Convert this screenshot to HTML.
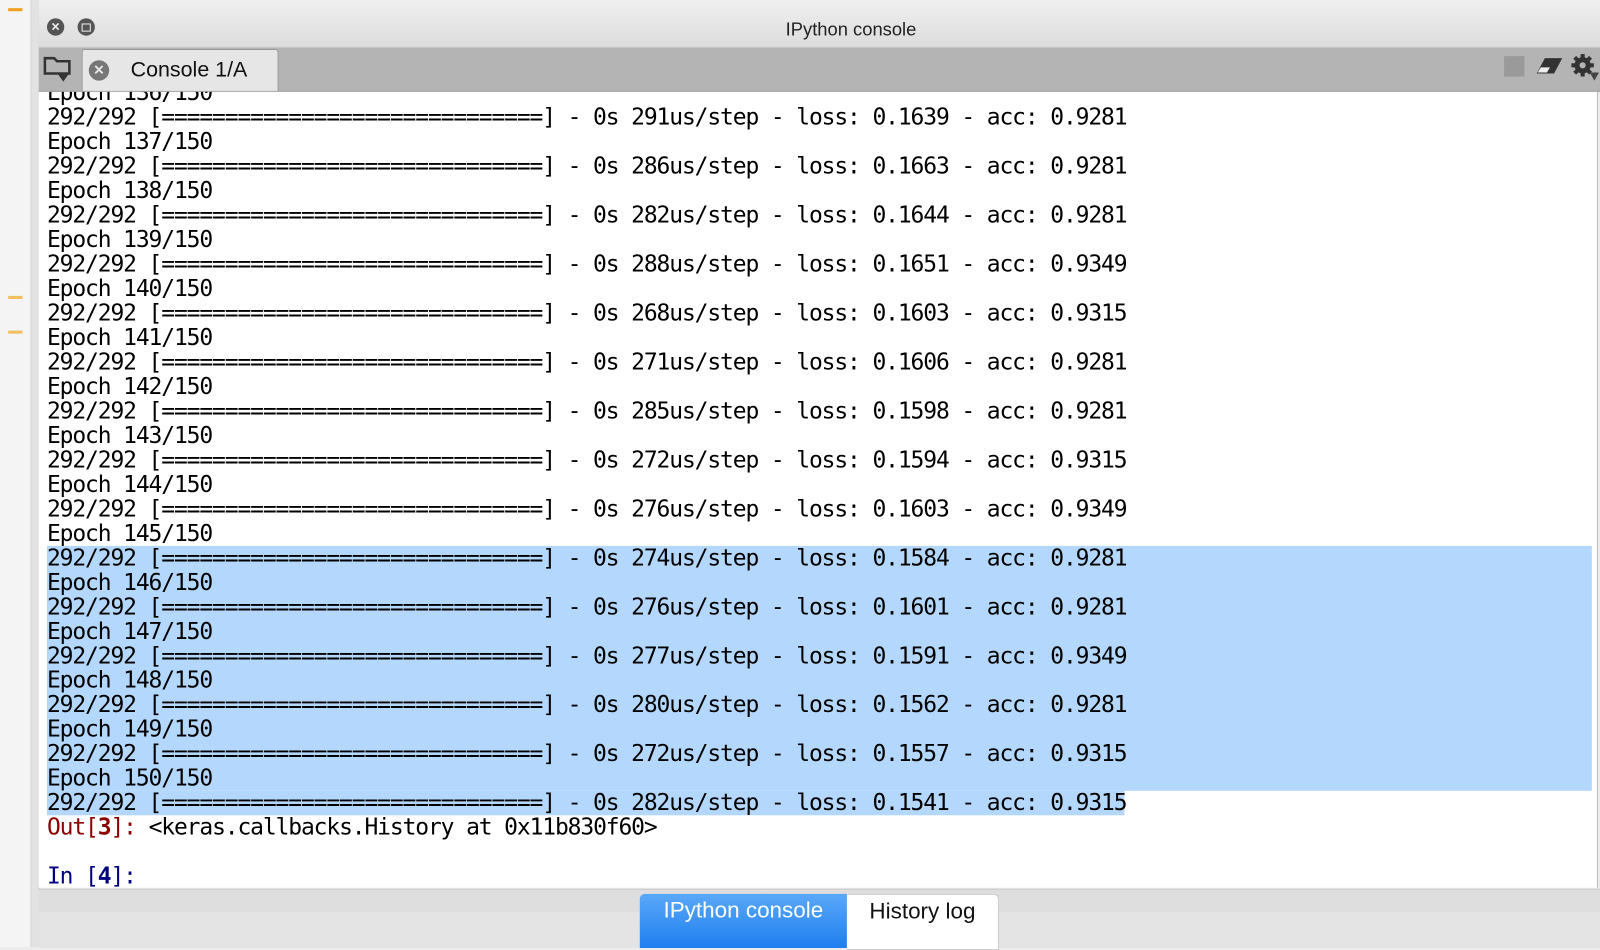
<!DOCTYPE html>
<html><head><meta charset="utf-8"><style>
body{margin:0;width:1600px;height:928px;overflow:hidden;background:#ececec;font-family:"Liberation Sans",sans-serif;position:relative}
#wrap{position:absolute;left:0;top:0;width:1568px;height:910px;transform:scale(1.0204);transform-origin:0 0}
.abs{position:absolute}
#left{left:0;top:0;width:30px;height:928px;background:#f4f4f4;border-right:1px solid #d0d0d0}
#left2{left:31px;top:0;width:7px;height:928px;background:#e2e2e2;border-right:1px solid #c8c8c8}
#title{left:38px;top:0;width:1562px;height:46px;background:linear-gradient(#f0f0f0,#dcdcdc);border-bottom:1px solid #c4c4c4}
#tb{left:38px;top:47px;width:1562px;height:42px;background:#b4b4b4;border-bottom:1px solid #9a9a9a}
#con{left:38px;top:90px;width:1527px;height:780px;background:#fff;border-right:1px solid #bbb;overflow:hidden}
.ln{position:absolute;left:8px;margin-top:2px;height:24px;line-height:24px;font-family:"DejaVu Sans Mono","Liberation Mono",monospace;font-size:22.5px;letter-spacing:-1.1px;white-space:pre;color:#000}
.hl{position:absolute;background:#b3d7fd}
#bot{left:38px;top:871px;width:1562px;height:57px;background:#e4e4e4;border-top:1px solid #c8c8c8}
</style></head><body><div id="wrap">
<div class="abs" id="left"></div>
<div class="abs" style="left:8px;top:8px;width:14px;height:3px;background:#f0a020"></div>
<div class="abs" style="left:8px;top:290px;width:14px;height:3px;background:#f0c060"></div>
<div class="abs" style="left:8px;top:324px;width:14px;height:3px;background:#f0c060"></div>
<div class="abs" id="left2"></div>
<div class="abs" id="title">
 <div class="abs" style="left:8px;top:18px;width:17px;height:17px;border-radius:50%;background:#555;color:#eee;font-size:14px;line-height:17px;text-align:center;font-weight:bold">×</div>
 <div class="abs" style="left:38px;top:18px;width:17px;height:17px;border-radius:50%;background:#555"><div class="abs" style="left:4px;top:5px;width:7px;height:6px;border:1.5px solid #eee"></div></div>
 <div class="abs" style="left:0;width:1592px;top:19px;text-align:center;font-size:18px;color:#222">IPython console</div>
</div>
<div class="abs" id="tb">
 <svg class="abs" style="left:4px;top:6px" width="30" height="32" viewBox="0 0 30 32"><path d="M2 4h9l3 3h12v12H2z" fill="none" stroke="#333" stroke-width="2.5"/><path d="M15 20h10l-5 7z" fill="#333"/></svg>
 <div class="abs" style="left:42px;top:1px;width:191px;height:40px;background:#e6e6e6;border:1px solid #999;border-bottom:none;border-radius:3px 3px 0 0">
  <div class="abs" style="left:6px;top:10px;width:20px;height:20px;border-radius:50%;background:#777;color:#e6e6e6;font-size:17px;line-height:20px;text-align:center;font-weight:bold">×</div>
  <div class="abs" style="left:47px;top:8px;font-size:21px;color:#111">Console 1/A</div>
 </div>
 <div class="abs" style="left:1436px;top:8px;width:20px;height:20px;background:#9a9a9a"></div>
 <svg class="abs" style="left:1466px;top:8px" width="30" height="20" viewBox="0 0 30 20"><path d="M10 2h17l-8 15H2z" fill="#333"/><path d="M6 11h9l-3 5H3z" fill="#eee"/></svg>
 <svg class="abs" style="left:1500px;top:4px" width="30" height="30" viewBox="0 0 30 30"><g fill="#333"><circle cx="13" cy="13" r="8"/><rect x="11" y="2" width="4" height="22"/><rect x="2" y="11" width="22" height="4"/><rect x="11" y="2" width="4" height="22" transform="rotate(45 13 13)"/><rect x="11" y="2" width="4" height="22" transform="rotate(-45 13 13)"/></g><circle cx="13" cy="13" r="3" fill="#b4b4b4"/><path d="M20 20h9l-4.5 8z" fill="#444"/></svg>
</div>
<div class="abs" id="con">
<div class="hl" style="left:8px;top:445px;width:1514px;height:240px"></div>
<div class="hl" style="left:8px;top:685px;width:1056px;height:24px"></div>
<div class="ln" style="top:-13px">Epoch 136/150</div>
<div class="ln" style="top:11px">292/292 [==============================] - 0s 291us/step - loss: 0.1639 - acc: 0.9281</div>
<div class="ln" style="top:35px">Epoch 137/150</div>
<div class="ln" style="top:59px">292/292 [==============================] - 0s 286us/step - loss: 0.1663 - acc: 0.9281</div>
<div class="ln" style="top:83px">Epoch 138/150</div>
<div class="ln" style="top:107px">292/292 [==============================] - 0s 282us/step - loss: 0.1644 - acc: 0.9281</div>
<div class="ln" style="top:131px">Epoch 139/150</div>
<div class="ln" style="top:155px">292/292 [==============================] - 0s 288us/step - loss: 0.1651 - acc: 0.9349</div>
<div class="ln" style="top:179px">Epoch 140/150</div>
<div class="ln" style="top:203px">292/292 [==============================] - 0s 268us/step - loss: 0.1603 - acc: 0.9315</div>
<div class="ln" style="top:227px">Epoch 141/150</div>
<div class="ln" style="top:251px">292/292 [==============================] - 0s 271us/step - loss: 0.1606 - acc: 0.9281</div>
<div class="ln" style="top:275px">Epoch 142/150</div>
<div class="ln" style="top:299px">292/292 [==============================] - 0s 285us/step - loss: 0.1598 - acc: 0.9281</div>
<div class="ln" style="top:323px">Epoch 143/150</div>
<div class="ln" style="top:347px">292/292 [==============================] - 0s 272us/step - loss: 0.1594 - acc: 0.9315</div>
<div class="ln" style="top:371px">Epoch 144/150</div>
<div class="ln" style="top:395px">292/292 [==============================] - 0s 276us/step - loss: 0.1603 - acc: 0.9349</div>
<div class="ln" style="top:419px">Epoch 145/150</div>
<div class="ln" style="top:443px">292/292 [==============================] - 0s 274us/step - loss: 0.1584 - acc: 0.9281</div>
<div class="ln" style="top:467px">Epoch 146/150</div>
<div class="ln" style="top:491px">292/292 [==============================] - 0s 276us/step - loss: 0.1601 - acc: 0.9281</div>
<div class="ln" style="top:515px">Epoch 147/150</div>
<div class="ln" style="top:539px">292/292 [==============================] - 0s 277us/step - loss: 0.1591 - acc: 0.9349</div>
<div class="ln" style="top:563px">Epoch 148/150</div>
<div class="ln" style="top:587px">292/292 [==============================] - 0s 280us/step - loss: 0.1562 - acc: 0.9281</div>
<div class="ln" style="top:611px">Epoch 149/150</div>
<div class="ln" style="top:635px">292/292 [==============================] - 0s 272us/step - loss: 0.1557 - acc: 0.9315</div>
<div class="ln" style="top:659px">Epoch 150/150</div>
<div class="ln" style="top:683px">292/292 [==============================] - 0s 282us/step - loss: 0.1541 - acc: 0.9315</div>
<div class="ln" style="top:707px"><span style="color:#8b0000">Out[<b>3</b>]:</span> &lt;keras.callbacks.History at 0x11b830f60&gt;</div>
<div class="ln" style="top:755px"><span style="color:#000080">In [<b>4</b>]:</span></div>
</div>
<div class="abs" id="bot">
 <div class="abs" style="left:0;top:0;width:1562px;height:22px;background:#dedede"></div>
 <div class="abs" style="left:589px;top:4px;width:203px;height:53px;background:linear-gradient(#5aa8f8,#1f7ff0);border-radius:5px 0 0 0;color:#fff;font-size:22px;line-height:32px;text-align:center">IPython console</div>
 <div class="abs" style="left:792px;top:4px;width:148px;height:53px;background:#fff;border:1px solid #ccc;border-left:none;border-radius:0 5px 0 0;color:#111;font-size:22px;line-height:32px;text-align:center">History log</div>
</div>
</div></body></html>
